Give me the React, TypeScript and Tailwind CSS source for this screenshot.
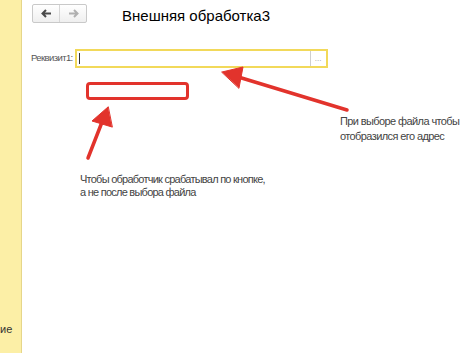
import React from "react";

const font = { fontFamily: '"Liberation Sans", Arial, sans-serif' };

function NavButtons() {
  return (
    <div className="flex h-[19px] w-[55px] rounded-[2px] border border-[#c9c9c9] bg-gradient-to-b from-white to-[#efefef]">
      <div className="flex flex-1 items-center justify-center border-r border-[#d6d6d6]">
        <svg width="11" height="9" viewBox="0 0 11 9">
          <path d="M1 4.5h9M5 1L1.5 4.5 5 8" stroke="#4a4a4a" strokeWidth="2" fill="none" />
        </svg>
      </div>
      <div className="flex flex-1 items-center justify-center">
        <svg width="11" height="9" viewBox="0 0 11 9">
          <path d="M1 4.5h9M6 1l3.5 3.5L6 8" stroke="#b0b0b0" strokeWidth="2" fill="none" />
        </svg>
      </div>
    </div>
  );
}

export default function App() {
  return (
    <div className="flex h-[353px] w-[474px] overflow-hidden bg-white" style={font}>
      {/* side panel */}
      <div className="flex w-[22px] shrink-0 flex-col justify-end border-r border-[#e6d68a] bg-[#fcefa6] pb-[18px]">
        <span className="text-[11px] leading-none text-[#333]">ие</span>
      </div>

      <div className="relative flex-1">
        <div className="flex items-center pl-[10px] pt-[4px]">
          <NavButtons />
          <h1 className="ml-[35px] mt-[4px] text-[15px] leading-none text-black">
            Внешняя обработка3
          </h1>
        </div>

        <div className="mt-[26px] flex items-center pl-[9px]">
          <span className="mr-[2px] text-[9.5px] tracking-[-0.6px] text-[#555]">Реквизит1:</span>
          <div className="flex h-[19px] w-[253px] items-center border-2 border-[#f2d95a] bg-white">
            <div className="ml-[2px] h-[11px] w-[1px] bg-[#333]" />
            <div className="flex-1" />
            <div className="flex h-full w-[16px] items-center justify-center border-l border-[#cfcfcf] text-[8px] leading-none text-[#999]">
              ...
            </div>
          </div>
        </div>

        <div className="ml-[64px] mt-[14px] h-[18px] w-[103px] rounded-[4px] border-[3px] border-[#e2332c]" />

        <div className="ml-[318px] mt-[14px] text-[11px] leading-[15px] tracking-[-0.6px] text-[#444]">
          <p>При выборе файла чтобы</p>
          <p>отобразился его адрес</p>
        </div>

        <div className="ml-[58px] mt-[29px] text-[11px] leading-[13px] tracking-[-0.75px] text-[#444]">
          <p>Чтобы обработчик срабатывал по кнопке,</p>
          <p>а не после выбора файла</p>
        </div>

        {/* annotation arrows */}
        <svg className="pointer-events-none absolute left-0 top-0" width="452" height="353">
          <g fill="#e2332c" stroke="#e2332c" strokeLinecap="round">
            <line x1="325" y1="110" x2="213" y2="76" strokeWidth="3.5" />
            <polygon points="200,72 221,67 217,88" strokeWidth="1" strokeLinejoin="round" />
            <line x1="66" y1="158" x2="82" y2="117" strokeWidth="3.5" />
            <polygon points="86,107 70,121 90,127" strokeWidth="1" strokeLinejoin="round" />
          </g>
        </svg>
      </div>
    </div>
  );
}
